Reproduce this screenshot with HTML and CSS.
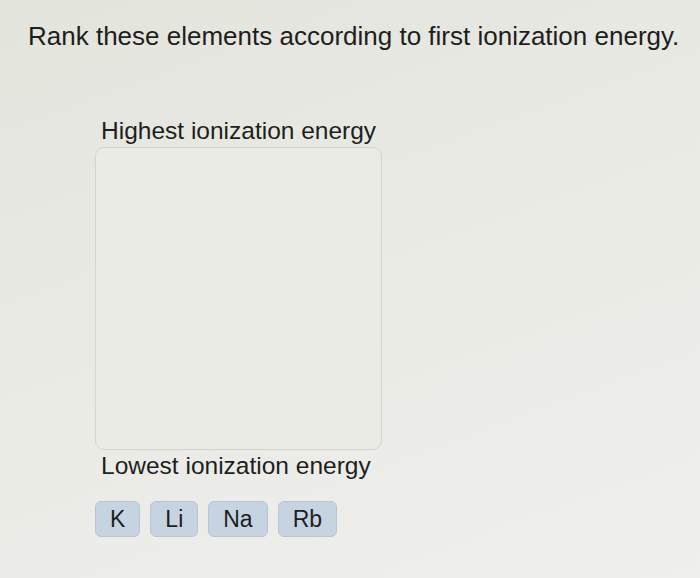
FILE: index.html
```html
<!DOCTYPE html>
<html lang="en">
<head>
  <meta charset="UTF-8" />
  <title>Rank elements</title>
  <link rel="stylesheet" href="styles.css">
</head>
<body>
  <div class="question">
    <h1>Rank these elements according to first ionization energy.</h1>

    <div class="ranking">
      <div class="rank-label">Highest ionization energy</div>
      <div class="drop-zone"></div>
      <div class="rank-label">Lowest ionization energy</div>

      <div class="choices">
        <span class="chip">K</span>
        <span class="chip">Li</span>
        <span class="chip">Na</span>
        <span class="chip">Rb</span>
      </div>
    </div>
  </div>
</body>
</html>
```

FILE: styles.css
```css
html, body {
  margin: 0;
  height: 100%;
}

body {
  font-family: 'Liberation Sans', Arial, sans-serif;
  color: #1e1e1e;
  background: linear-gradient(160deg, #e3e4dc 0%, #e9eae4 45%, #efefec 100%);
}

.question {
  padding: 18px 0 0 28px;
}

h1 {
  font-size: 26px;
  font-weight: normal;
  line-height: 36px;
  margin: 0;
}

/* Ranking area */
.ranking {
  margin: 62px 0 0 67px;
}

.rank-label {
  font-size: 24.5px;
  line-height: 30px;
  padding-left: 6px;
}

.drop-zone {
  width: 285px;
  height: 301px;
  margin: 1px 0 1px;
  border: 1px solid #d3d4cc;
  border-radius: 9px;
  background-color: #eaebe5;
}

/* Draggable element tiles */
.choices {
  display: flex;
  gap: 10px;
  margin-top: 20px;
}

.chip {
  display: block;
  height: 34px;
  line-height: 34px;
  padding: 0 14px;
  font-size: 23px;
  background-color: #c6d4e2;
  border: 1px solid #b7c6d4;
  border-radius: 6px;
}
```
